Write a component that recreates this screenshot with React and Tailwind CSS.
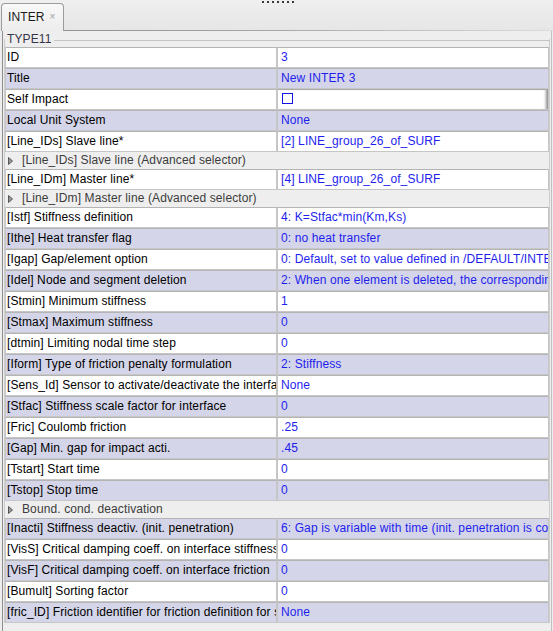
import React from "react"

const rows = [
    { l: "ID", v: "3" },
    { l: "Title", v: "New INTER 3", alt: true },
    { l: "Self Impact", check: true },
    { l: "Local Unit System", v: "None", alt: true },
    { l: "[Line_IDs] Slave line*", v: "[2] LINE_group_26_of_SURF" },
    { group: "[Line_IDs] Slave line (Advanced selector)" },
    { l: "[Line_IDm] Master line*", v: "[4] LINE_group_26_of_SURF" },
    { group: "[Line_IDm] Master line (Advanced selector)" },
    { l: "[Istf] Stiffness definition", v: "4: K=Stfac*min(Km,Ks)" },
    { l: "[Ithe] Heat transfer flag", v: "0: no heat transfer", alt: true },
    { l: "[Igap] Gap/element option", v: "0: Default, set to value defined in /DEFAULT/INTER/TYPE11" },
    { l: "[Idel] Node and segment deletion", v: "2: When one element is deleted, the corresponding segment is deleted", alt: true },
    { l: "[Stmin] Minimum stiffness", v: "1" },
    { l: "[Stmax] Maximum stiffness", v: "0", alt: true },
    { l: "[dtmin] Limiting nodal time step", v: "0" },
    { l: "[Iform] Type of friction penalty formulation", v: "2: Stiffness", alt: true },
    { l: "[Sens_Id] Sensor to activate/deactivate the interface", v: "None" },
    { l: "[Stfac] Stiffness scale factor for interface", v: "0", alt: true },
    { l: "[Fric] Coulomb friction", v: ".25" },
    { l: "[Gap] Min. gap for impact acti.", v: ".45", alt: true },
    { l: "[Tstart] Start time", v: "0" },
    { l: "[Tstop] Stop time", v: "0", alt: true },
    { group: "Bound. cond. deactivation" },
    { l: "[Inacti] Stiffness deactiv. (init. penetration)", v: "6: Gap is variable with time (init. penetration is computed)", alt: true },
    { l: "[VisS] Critical damping coeff. on interface stiffness", v: "0" },
    { l: "[VisF] Critical damping coeff. on interface friction", v: "0", alt: true },
    { l: "[Bumult] Sorting factor", v: "0" },
    { l: "[fric_ID] Friction identifier for friction definition for selected pairs of parts", v: "None", alt: true },
]

function Triangle() {
    return (
        <svg width="5" height="8" viewBox="0 0 5 8" className="shrink-0">
            <path d="M0.5 0.5 L4.5 4 L0.5 7.5 Z" fill="#9a9a9a" stroke="#4a4a4a" strokeWidth="0.9" />
        </svg>
    )
}

function GroupRow({ text }) {
    return (
        <div className="flex items-center h-[17px] pl-[3px] text-[#3c3c3c]">
            <Triangle />
            <span className="ml-[9px] leading-[17px] whitespace-nowrap">{text}</span>
        </div>
    )
}

function DataRow({ row }) {
    const bg = row.alt ? "bg-[#d4d5e8]" : "bg-white"
    return (
        <div className="flex h-[21px]">
            <div className={`w-[272px] h-full border border-[#c6c6c6] border-t-[#b4b4b4] ${bg} pl-px overflow-hidden whitespace-nowrap leading-[19px] text-black`}>
                {row.l}
            </div>
            {row.check ? (
                <div className="w-[272px] h-full border border-[#c6c6c6] border-t-[#a8a8a8] bg-white pl-[4px] pt-[3px] shadow-[inset_-4px_0_3px_-2px_#8c8c8c]">
                    <div className="w-[11px] h-[11px] border border-[#1414e6] bg-white"></div>
                </div>
            ) : (
                <div className={`w-[272px] h-full border border-[#c6c6c6] border-t-[#b4b4b4] ${bg} pl-[3px] overflow-hidden whitespace-nowrap leading-[19px] text-[#1e1eee]`}>
                    {row.v}
                </div>
            )}
        </div>
    )
}

export default function App() {
    return (
        <div className="w-[553px] h-[631px] overflow-hidden bg-[#ededed] font-['Liberation_Sans',Arial,sans-serif] text-[12px] tracking-[0.11px]">
            {/* tab strip */}
            <div className="relative h-[31px] bg-gradient-to-b from-[#efefef] to-[#e6e6e6]">
                <div className="absolute left-[262px] top-[1px] flex gap-[3px]">
                    {[0, 1, 2, 3, 4, 5, 6].map((i) => (
                        <span key={i} className="block w-[2px] h-[2px] bg-[#3a3a3a]"></span>
                    ))}
                </div>
                <div className="absolute left-[1px] right-0 bottom-0 h-px bg-gradient-to-r from-[#8c8c8c] via-[#a8a8a8] to-[#dcdcdc]"></div>
                <div className="absolute left-[1px] top-[3px] w-[63px] h-[28px] border border-b-0 border-[#9c9c9c] rounded-t-[4px] bg-gradient-to-b from-[#f8f8f8] to-[#ededed] flex items-center pl-[6px] pb-[2px]">
                    <span className="text-[#1a1a1a]">INTER</span>
                    <span className="ml-[5px] text-[10px] text-[#a0a0a0]">×</span>
                </div>
            </div>

            {/* panel */}
            <div className="ml-[2px] w-[550px] h-[600px] border-l border-r border-l-[#8e8e8e] border-r-[#c0c0c0] px-px bg-[#eeeeee]">
                <div className="flex items-center h-[16px] ml-[3px]">
                    <span className="text-[#34344a] leading-[16px] pl-0 pr-[3px]">TYPE11</span>
                    <div className="flex-1 h-px bg-[#c4c4c4] mt-[3px]"></div>
                </div>
                <div className="border-l border-r border-[#cdcdcd] -mt-[8px] pt-[8px]">
                    {rows.map((r, i) =>
                        r.group ? <GroupRow key={i} text={r.group} /> : <DataRow key={i} row={r} />
                    )}
                </div>
            </div>
        </div>
    )
}
